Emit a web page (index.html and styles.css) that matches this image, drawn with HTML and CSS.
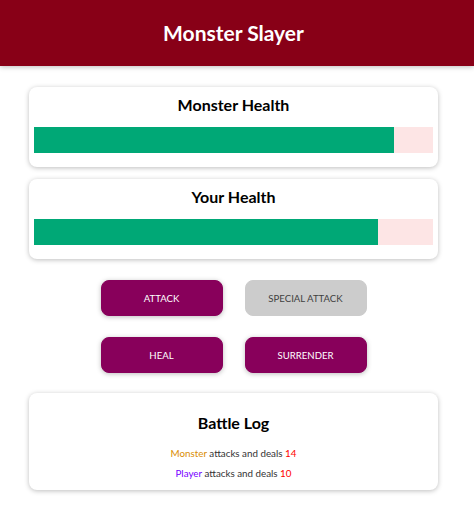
FILE: index.html
```html
<!DOCTYPE html>
<html>
<head>
<meta charset="utf-8">
<link rel="stylesheet" href="styles.css">
</head>
<body>
<header class="top">
  <h1 class="title">Monster Slayer</h1>
</header>
<main class="page">
  <section class="card">
    <h2 class="card-title">Monster Health</h2>
    <div class="healthbar"><div class="healthbar-value" style="width: 90.2%"></div></div>
  </section>
  <section class="card">
    <h2 class="card-title">Your Health</h2>
    <div class="healthbar"><div class="healthbar-value" style="width: 86.2%"></div></div>
  </section>
  <section class="controls">
    <button class="btn">ATTACK</button>
    <button class="btn" disabled>SPECIAL ATTACK</button>
    <button class="btn">HEAL</button>
    <button class="btn">SURRENDER</button>
  </section>
  <section class="card log">
    <h2 class="log-title">Battle Log</h2>
    <ul class="log-list">
      <li><span class="log-monster">Monster</span> attacks and deals <span class="log-damage">14</span></li>
      <li><span class="log-player">Player</span> attacks and deals <span class="log-damage">10</span></li>
    </ul>
  </section>
</main>
</body>
</html>
```

FILE: styles.css
```css
* { box-sizing: border-box; }
html { font-family: "Lato", "Noto Sans", sans-serif; font-size: 10.24px; }
body { margin: 0; background: #fff; }

.top {
  background: #880017;
  color: #fff;
  height: 66px;
  display: flex;
  align-items: center;
  justify-content: center;
  padding-right: 7px;
  padding-bottom: 2px;
  box-shadow: 0 1px 5px rgba(0,0,0,0.26);
  margin-bottom: 21px;
}
.title { margin: 0; font-size: 21px; font-weight: 700; }

.page { width: 467px; }

.card {
  width: 409px;
  margin: 0 auto 12px;
  padding: 5px;
  text-align: center;
  border-radius: 8px;
  box-shadow: 0 1px 5px rgba(0,0,0,0.26);
}
.card-title {
  margin: 2px 0 0;
  font-size: 16px;
  line-height: 22px;
  font-weight: 700;
  color: #000;
}
.healthbar {
  height: 26px;
  margin: 11px 0 9px;
  background: #fde5e5;
}
.healthbar-value { height: 100%; background: #00a876; }

.controls {
  width: 409px;
  margin: 21px auto 0;
  display: flex;
  flex-wrap: wrap;
  justify-content: center;
  column-gap: 22px;
  row-gap: 21px;
}
.btn {
  font: inherit;
  font-size: 9.6px;
  width: 122px;
  height: 36px;
  border: 1px solid #88005b;
  background: #88005b;
  color: #fff;
  border-radius: 8px;
  box-shadow: 0 1px 5px rgba(0,0,0,0.26);
  padding: 0;
}
.btn:disabled {
  background: #ccc;
  border-color: #ccc;
  color: #3f3f3f;
  box-shadow: none;
}

.log { margin-top: 20px; padding-bottom: 4px; }
.log-title {
  margin: 14px 0 12px;
  font-size: 16px;
  line-height: 22px;
  font-weight: 700;
}
.log-list { list-style: none; margin: 0; padding: 0; font-size: 9.8px; color: #333; }
.log-list li { line-height: 15px; margin: 0 0 5px; }
.log-monster { color: #da8d00; }
.log-player { color: #7700ff; }
.log-damage { color: #f00; }
```
